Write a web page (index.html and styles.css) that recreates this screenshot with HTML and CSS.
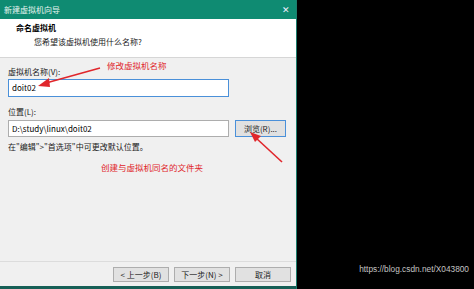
FILE: index.html
```html
<!DOCTYPE html>
<html lang="zh-CN">
	<head>
		<meta charset="UTF-8" />
		<title>新建虚拟机向导</title>
		<link rel="stylesheet" href="styles.css">
	</head>
	<body>
		<div class="dialog">
			<div class="titlebar">
				<p>新建虚拟机向导</p>
				<span class="close">✕</span>
			</div>
			<div class="header">
				<p class="heading">命名虚拟机</p>
				<p class="sub">您希望该虚拟机使用什么名称?</p>
			</div>
			<div class="body">
				<p class="label">虚拟机名称(V):</p>
				<div class="field focused">doit02</div>
				<p class="label second">位置(L):</p>
				<div class="row">
					<div class="field">D:\study\linux\doit02</div>
					<button class="browse">浏览(R)...</button>
				</div>
				<p class="hint">在"编辑"&gt;"首选项"中可更改默认位置。</p>
			</div>
			<div class="footer">
				<button>&lt; 上一步(B)</button>
				<button>下一步(N) &gt;</button>
				<button class="cancel">取消</button>
			</div>
			<div class="bottom"></div>

			<p class="note note1">修改虚拟机名称</p>
			<p class="note note2">创建与虚拟机同名的文件夹</p>
			<svg class="arrows" width="297" height="289" viewBox="0 0 297 289">
				<line x1="100" y1="68" x2="46" y2="83" stroke="#e0262b" stroke-width="1.6" />
				<polygon points="38,86 49,78 50,87" fill="#e0262b" />
				<line x1="282" y1="162" x2="256" y2="138" stroke="#e0262b" stroke-width="1.6" />
				<polygon points="250,132 261,136 255,142" fill="#e0262b" />
			</svg>
		</div>
		<div class="side">
			<p class="mark">https://blog.csdn.net/X043800</p>
		</div>
	</body>
</html>
```

FILE: styles.css
```css
* {
	margin: 0;
	padding: 0;
	box-sizing: border-box;
}
body {
	width: 474px;
	height: 289px;
	display: flex;
	background-color: #000;
	font-family: "Noto Sans CJK SC", "Noto Sans", sans-serif;
	font-size: 8px;
	color: #1a1a1a;
	overflow: hidden;
}
.dialog {
	position: relative;
	width: 297px;
	height: 289px;
	display: flex;
	flex-direction: column;
	background-color: #f0f0f0;
	border-right: 1px solid #1b7d6c;

	.titlebar {
		height: 19px;
		display: flex;
		justify-content: space-between;
		align-items: center;
		padding: 0 6px 0 4px;
		background-color: #0f8b72;
		color: #e6f4ef;
		.close {
			font-size: 9px;
			color: #eef;
		}
	}
	.header {
		height: 39px;
		background-color: #fff;
		border-bottom: 1px solid #d6d6d6;
		padding-top: 2px;
		line-height: 14px;
		.heading {
			padding-left: 16px;
			font-weight: bold;
			color: #000;
		}
		.sub {
			padding-left: 34px;
		}
	}
	.body {
		flex: 1;
		padding: 8px 0 0 8px;
		.label {
			line-height: 12px;
			margin-bottom: 1px;
		}
		.second {
			margin-top: 9px;
			margin-bottom: 2px;
		}
		.row {
			display: flex;
			gap: 6px;
		}
		.field {
			width: 221px;
			height: 17px;
			line-height: 15px;
			padding-left: 3px;
			background-color: #fff;
			border: 1px solid #adadad;
			color: #000;
		}
		.focused {
			height: 18px;
			line-height: 16px;
			border-color: #4a90d9;
		}
		.browse {
			width: 51px;
			height: 17px;
		}
		.hint {
			margin-top: 4px;
			line-height: 12px;
		}
	}
	button {
		font-family: inherit;
		font-size: 8px;
		color: #222;
		background-color: #e1e1e1;
		border: 1px solid #adadad;
	}
	.browse {
		border-color: #4a90d9;
	}
	.footer {
		height: 25px;
		display: flex;
		justify-content: flex-end;
		align-items: center;
		gap: 5px;
		padding: 1px 5px 0 0;
		border-top: 1px solid #dcdcdc;
		button {
			width: 56px;
			height: 15px;
		}
	}
	.bottom {
		height: 3px;
		background-color: #165f56;
	}
	.note {
		position: absolute;
		color: #e0262b;
		font-size: 8.5px;
		line-height: 12px;
	}
	.note1 {
		left: 107px;
		top: 59px;
	}
	.note2 {
		left: 101px;
		top: 161px;
	}
	.arrows {
		position: absolute;
		left: 0;
		top: 0;
	}
}
.side {
	flex: 1;
	display: flex;
	align-items: flex-end;
	justify-content: flex-end;
	padding: 0 5px 15px 0;
	.mark {
		font-family: "Liberation Sans", Arial, sans-serif;
		font-size: 8.3px;
		color: #c4c4c4;
	}
}
```
